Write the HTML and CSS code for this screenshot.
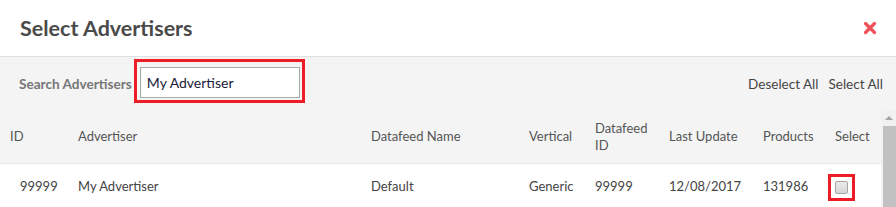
FILE: index.html
```html
<!DOCTYPE html>
<html lang="en">
<head>
  <meta charset="UTF-8" />
  <title>Select Advertisers</title>
  <link rel="stylesheet" href="styles.css">
</head>
<body>
  <div class="modal">
    <header class="modal-head">
      <h1>Select Advertisers</h1>
      <button class="close-btn" aria-label="Close">
        <svg width="14" height="14" viewBox="0 0 14 14">
          <path d="M2.5 2.5 L11.5 11.5 M11.5 2.5 L2.5 11.5" stroke="#f0525a" stroke-width="3.2" stroke-linecap="round"/>
        </svg>
      </button>
    </header>

    <div class="search-row">
      <label for="search">Search Advertisers</label>
      <span class="mark mark-input">
        <input type="text" id="search" value="My Advertiser">
      </span>
      <div class="bulk">
        <a href="#">Deselect All</a>
        <a href="#">Select All</a>
      </div>
    </div>

    <div class="table-wrap">
      <table class="adv-table">
        <colgroup>
          <col style="width: 68px">
          <col style="width: 293px">
          <col style="width: 158px">
          <col style="width: 66px">
          <col style="width: 74px">
          <col style="width: 94px">
          <col style="width: 72px">
          <col style="width: 56px">
        </colgroup>
        <thead>
          <tr>
            <th>ID</th>
            <th>Advertiser</th>
            <th>Datafeed Name</th>
            <th>Vertical</th>
            <th>Datafeed<br>ID</th>
            <th>Last Update</th>
            <th>Products</th>
            <th>Select</th>
          </tr>
        </thead>
        <tbody>
          <tr>
            <td class="id">99999</td>
            <td>My Advertiser</td>
            <td>Default</td>
            <td>Generic</td>
            <td>99999</td>
            <td>12/08/2017</td>
            <td>131986</td>
            <td><span class="mark mark-check"><span class="checkbox"></span></span></td>
          </tr>
        </tbody>
      </table>
      <div class="scrollbar">
        <span class="arrow"></span>
        <span class="thumb"></span>
      </div>
    </div>
  </div>
</body>
</html>
```

FILE: styles.css
```css
body {
  margin: 0;
  font-family: Lato, "Open Sans", sans-serif;
  background: #fff;
  color: #444;
}

.modal {
  width: 896px;
  height: 207px;
  overflow: hidden;
}

.modal-head {
  height: 56px;
  display: flex;
  align-items: center;
  justify-content: space-between;
  padding: 0 19px 0 20px;
  border-bottom: 1px solid #e0e0e0;
}

.modal-head h1 {
  margin: 0;
  font-size: 21.5px;
  font-weight: bold;
  color: #4a4a4a;
}

.close-btn {
  background: none;
  border: none;
  padding: 0;
  width: 14px;
  height: 14px;
  cursor: pointer;
}

.search-row {
  height: 53px;
  background: #f4f4f4;
  display: flex;
  align-items: center;
  padding: 0 13px 0 19px;
}

.search-row label {
  font-size: 13.6px;
  font-weight: bold;
  color: #777;
  margin-right: 2px;
}

.mark {
  border: 3px solid #ee1c25;
  display: inline-flex;
}

.mark-input {
  align-self: flex-start;
  margin-top: 2px;
  padding: 5px 2px 2px 3px;
}

.mark-input input {
  width: 160px;
  height: 31px;
  box-sizing: border-box;
  border: 1px solid #aaa;
  padding: 0 6px;
  font-family: inherit;
  font-size: 14px;
  color: #1a1a3a;
  outline: none;
}

.bulk {
  margin-left: auto;
  display: flex;
  gap: 10px;
}

.bulk a {
  font-size: 13.5px;
  color: #444;
  text-decoration: none;
}

.table-wrap {
  display: flex;
  background: #fff;
}

.adv-table {
  width: 881px;
  table-layout: fixed;
  border-collapse: collapse;
  font-size: 13px;
}

.adv-table th {
  background: #f4f4f4;
  height: 53px;
  padding: 0 10px;
  text-align: left;
  font-weight: normal;
  color: #555;
  line-height: 17px;
  border-bottom: 1px solid #e8e8e8;
}

.adv-table td {
  height: 44px;
  padding: 0 10px;
  color: #444;
}

.adv-table td.id {
  padding-left: 20px;
}

.mark-check {
  padding: 4px;
  margin-left: -7px;
  margin-top: 2px;
}

.checkbox {
  width: 13px;
  height: 13px;
  box-sizing: border-box;
  border: 1px solid #a6a6a6;
  border-radius: 2px;
  background: linear-gradient(#eaeaea, #d6d6d6);
}

.scrollbar {
  width: 15px;
  display: flex;
  flex-direction: column;
  align-items: center;
  background: #f1f1f1;
}

.scrollbar .arrow {
  margin-top: 6px;
  width: 0;
  height: 0;
  border-left: 4px solid transparent;
  border-right: 4px solid transparent;
  border-bottom: 4px solid #a3a3a3;
}

.scrollbar .thumb {
  margin-top: 6px;
  width: 13px;
  margin-left: 2px;
  flex: 1;
  background: #c1c1c1;
}
```
